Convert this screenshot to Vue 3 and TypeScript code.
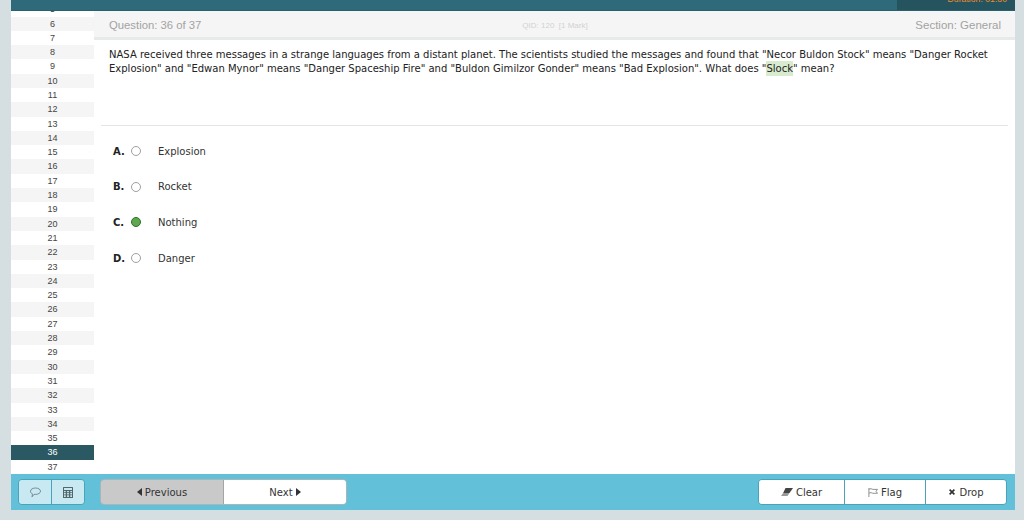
<script setup lang="ts">
const numbers: number[] = [];
for (let i = 5; i <= 37; i++) numbers.push(i);

const options = [
  { letter: "A.", text: "Explosion", checked: false },
  { letter: "B.", text: "Rocket", checked: false },
  { letter: "C.", text: "Nothing", checked: true },
  { letter: "D.", text: "Danger", checked: false },
];
</script>

<template>
  <div class="page">
    <header class="topbar">
      <div class="title">Aptitude Test - Logical Reasoning</div>
      <div class="timer"><span>Duration: 01:30</span></div>
    </header>

    <div class="middle">
      <aside class="sidebar">
        <div
          v-for="n in numbers"
          :key="n"
          class="num"
          :class="{ alt: n % 2 === 0, current: n === 36 }"
        >
          {{ n }}
        </div>
      </aside>

      <main class="content">
        <div class="qhead">
          <span>Question: 36 of 37</span>
          <span class="qid">QID: 120 &nbsp;[1 Mark]</span>
          <span class="section">Section: General</span>
        </div>
        <div class="qtext">
          NASA received three messages in a strange languages from a distant planet. The scientists studied the messages and found that "Necor Buldon Stock" means "Danger Rocket Explosion" and "Edwan Mynor" means "Danger Spaceship Fire" and "Buldon Gimilzor Gonder" means "Bad Explosion". What does "<span class="mark">Slock</span>" mean?
        </div>
        <div class="options">
          <div v-for="o in options" :key="o.letter" class="option">
            <b class="letter">{{ o.letter }}</b>
            <span class="radio" :class="{ on: o.checked }"></span>
            <span class="otext">{{ o.text }}</span>
          </div>
        </div>
      </main>
    </div>

    <footer class="footer">
      <div class="group tools">
        <button class="btn tool">
          <svg width="11" height="11" viewBox="0 0 11 11" fill="none" stroke="#52666c" stroke-width="0.7">
            <path d="M5.500 1C8.200 1 10.500 2.300 10.500 4.200S8.200 7.400 5.500 7.400c-.5 0-1 0-1.400-.1C3.500 8.300 2.900 9.200 1.900 9.700c.4-.8.500-1.700.4-2.900C1.100 6.200.5 5.300.5 4.200.5 2.300 2.800 1 5.500 1z" />
          </svg>
        </button>
        <button class="btn tool">
          <svg width="10" height="11" viewBox="0 0 10 11">
            <path fill="#52666c" fill-rule="evenodd" d="M.6 0h8.800a.6.6 0 0 1 .6.600v9.800a.6.6 0 0 1-.6.6H.6a.6.6 0 0 1-.6-.6V.600A.6.6 0 0 1 .6 0zM1 1v2h8V1zM1 4v1.300h1.700V4zM4.100 4v1.300h1.800V4zM7.300 4v1.300H9V4zM1 6.100v1.300h1.700V6.100zM4.100 6.100v1.300h1.800V6.100zM7.300 6.100v1.300H9V6.100zM1 8.300V10h1.700V8.300zM4.100 8.300V10h1.800V8.300zM7.300 8.300V10H9V8.300z" />
          </svg>
        </button>
      </div>

      <div class="group nav">
        <button class="btn navbtn prev">
          <svg width="5" height="8" viewBox="0 0 5 8"><path d="M5 0v8L0 4z" fill="#333" /></svg>
          Previous
        </button>
        <button class="btn navbtn">
          Next
          <svg width="5" height="8" viewBox="0 0 5 8"><path d="M0 0v8l5-4z" fill="#333" /></svg>
        </button>
      </div>

      <div class="group actions">
        <button class="btn action clear">
          <svg width="12" height="9" viewBox="0 0 12 9">
            <path d="M4.500 0H12L8.500 5H2.200z" fill="#444" />
            <path d="M2.200 5h6.300L6.500 8H0z" fill="#999" />
          </svg>
          Clear
        </button>
        <button class="btn action flag">
          <svg width="10" height="9" viewBox="0 0 10 9" fill="none" stroke="#777" stroke-width="0.8">
            <path d="M.9 0v9" />
            <path d="M.9 1.200c1.500-.7 2.800-.5 3.900.2h4.700L8 3.300l1.500 2H4.800c-1.100-.7-2.400-.8-3.900-.2" />
          </svg>
          Flag
        </button>
        <button class="btn action drop">
          <svg width="8" height="8" viewBox="0 0 8 8"><path d="M1 2.200 2.200 1 4 2.800 5.800 1 7 2.200 5.200 4 7 5.800 5.800 7 4 5.200 2.200 7 1 5.800 2.800 4z" fill="#333" /></svg>
          Drop
        </button>
      </div>
    </footer>
  </div>
</template>

<style>
html,
body {
  margin: 0;
  background: #d5dfe2;
}
</style>

<style scoped>
.page {
  width: 1004px;
  height: 510px;
  margin-left: 11px;
  display: flex;
  flex-direction: column;
  background: #fff;
  font-family: "DejaVu Sans", sans-serif;
  color: #333;
}

.topbar {
  height: 11px;
  flex: none;
  display: flex;
  justify-content: space-between;
  background: #2f6a7b;
  border-bottom: 1px solid #29606f;
  box-sizing: border-box;
  overflow: hidden;
}

.title {
  font-size: 11px;
  line-height: 11px;
  margin-top: -11.500px;
  margin-left: 59px;
  color: #e58a3a;
}

.timer {
  width: 118px;
  background: #25545f;
  text-align: right;
  font-family: "Liberation Sans", sans-serif;
  font-size: 8.700px;
  line-height: 11px;
  color: #f08a2c;
}

.timer span {
  display: block;
  margin-top: -6px;
  margin-right: 8px;
}

.middle {
  flex: 1;
  min-height: 0;
  display: flex;
}

.sidebar {
  width: 83px;
  flex: none;
  display: flex;
  flex-direction: column;
  justify-content: flex-end;
  overflow: hidden;
}

.num {
  flex: none;
  height: 14.3px;
  line-height: 14.3px;
  text-align: center;
  font-family: "Liberation Sans", sans-serif;
  font-size: 9px;
  color: #444;
  background: #fff;
}

.num.alt {
  background: #f5f5f5;
}

.num.current {
  background: #2b5963;
  color: #fff;
}

.content {
  flex: 1;
  min-width: 0;
  display: flex;
  flex-direction: column;
}

.qhead {
  height: 29px;
  flex: none;
  box-sizing: border-box;
  display: grid;
  grid-template-columns: 1fr auto 1fr;
  align-items: center;
  padding: 2px 14px 0 15px;
  background: #f5f5f5;
  border-bottom: 3px solid #e6eaeb;
  font-family: "Liberation Sans", sans-serif;
  font-size: 11.300px;
  color: #a3a3a3;
}

.section {
  text-align: right;
  font-size: 11.500px;
}

.qid {
  font-size: 8px;
  color: #d2d2d2;
}

.qtext {
  height: 86px;
  flex: none;
  box-sizing: border-box;
  margin: 0 7px;
  padding: 8px 14px 0 8px;
  font-size: 10.020px;
  line-height: 14px;
  color: #222;
  border-bottom: 1px solid #e1e5e6;
}

.mark {
  background: #d9ebcf;
  padding: 2px 0;
}

.options {
  padding: 16px 0 0 19px;
  display: flex;
  flex-direction: column;
  gap: 17.700px;
}

.option {
  height: 18px;
  display: flex;
  align-items: center;
  font-size: 10px;
  color: #333;
}

.letter {
  width: 18px;
  font-weight: 700;
  color: #222;
}

.radio {
  width: 8px;
  height: 8px;
  margin-right: 17px;
  border: 1px solid #a0a0a0;
  border-radius: 50%;
  background: #fff;
}

.radio.on {
  background: #5fa84f;
  border-color: #2f6f2a;
}

.footer {
  height: 36px;
  flex: none;
  box-sizing: border-box;
  display: flex;
  align-items: center;
  padding: 0 8px 0 7px;
  background: #62c1d8;
}

.group {
  display: flex;
  height: 26px;
  box-sizing: border-box;
  border: 1px solid #4ba3b8;
  border-radius: 4px;
  overflow: hidden;
}

.btn {
  margin: 0;
  padding: 0;
  border: 0;
  display: flex;
  align-items: center;
  justify-content: center;
  gap: 3px;
  height: 100%;
  background: #fff;
  font-family: "DejaVu Sans", sans-serif;
  font-size: 10px;
  color: #333;
}

.tools {
  width: 67px;
}

.tool {
  flex: 1;
  background: #c9e9f2;
}

.tool + .tool {
  border-left: 1px solid #4ba3b8;
}

.nav {
  width: 247px;
  margin-left: 15px;
  border-color: #a9b5b8;
}

.navbtn {
  flex: 1;
}

.prev {
  background: #c9c9c9;
  border-right: 1px solid #a5a5a5;
}

.actions {
  width: 249px;
  margin-left: auto;
}

.action {
  flex: none;
}

.action + .action {
  border-left: 1px solid #4ba3b8;
}

.clear {
  width: 85px;
}

.flag {
  width: 81px;
}

.drop {
  flex: 1;
}
</style>
